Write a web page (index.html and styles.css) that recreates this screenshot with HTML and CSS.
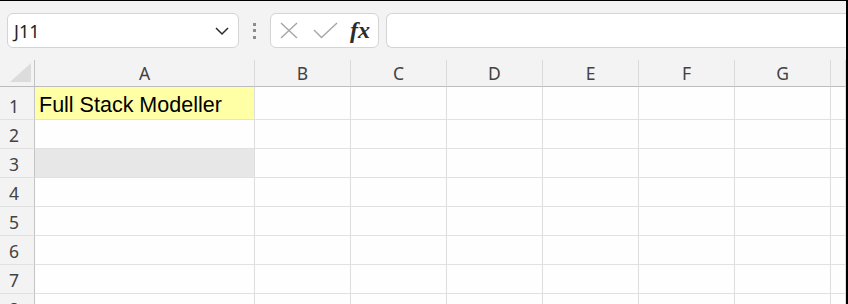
FILE: index.html
```html
<!DOCTYPE html>
<html lang="en">
<head>
    <meta charset="UTF-8">
    <title>Sheet</title>
    <link rel="stylesheet" href="styles.css">
</head>
<body>
    <div class="toolbar">
        <div class="namebox">
            <span class="ref">J11</span>
            <svg class="chevron" width="16" height="10" viewBox="0 0 16 10">
                <path d="M2 2 L8 8 L14 2" fill="none" stroke="#2b2b2b" stroke-width="1.5"/>
            </svg>
        </div>
        <div class="grip">
            <span class="dot"></span>
            <span class="dot"></span>
            <span class="dot"></span>
        </div>
        <div class="fxbox">
            <svg class="icon" width="18" height="17" viewBox="0 0 18 17">
                <path d="M1 1 L17 16 M17 1 L1 16" stroke="#a6a6a6" stroke-width="1.4" fill="none"/>
            </svg>
            <svg class="icon" width="25" height="17" viewBox="0 0 25 17">
                <path d="M1 8 L8.5 15.5 L24 1" stroke="#a6a6a6" stroke-width="1.4" fill="none"/>
            </svg>
            <span class="fx">fx</span>
        </div>
        <div class="formula"></div>
    </div>

    <div class="sheet">
        <div class="row head">
            <div class="corner"><span class="tri"></span></div>
            <div class="col">A</div>
            <div class="col">B</div>
            <div class="col">C</div>
            <div class="col">D</div>
            <div class="col">E</div>
            <div class="col">F</div>
            <div class="col">G</div>
            <div class="col"></div>
        </div>
        <div class="row first">
            <div class="num">1</div>
            <div class="cell note">Full Stack Modeller</div>
            <div class="cell"></div><div class="cell"></div><div class="cell"></div>
            <div class="cell"></div><div class="cell"></div><div class="cell"></div><div class="cell"></div>
        </div>
        <div class="row">
            <div class="num">2</div>
            <div class="cell"></div><div class="cell"></div><div class="cell"></div><div class="cell"></div>
            <div class="cell"></div><div class="cell"></div><div class="cell"></div><div class="cell"></div>
        </div>
        <div class="row">
            <div class="num">3</div>
            <div class="cell shade"></div><div class="cell"></div><div class="cell"></div><div class="cell"></div>
            <div class="cell"></div><div class="cell"></div><div class="cell"></div><div class="cell"></div>
        </div>
        <div class="row">
            <div class="num">4</div>
            <div class="cell"></div><div class="cell"></div><div class="cell"></div><div class="cell"></div>
            <div class="cell"></div><div class="cell"></div><div class="cell"></div><div class="cell"></div>
        </div>
        <div class="row">
            <div class="num">5</div>
            <div class="cell"></div><div class="cell"></div><div class="cell"></div><div class="cell"></div>
            <div class="cell"></div><div class="cell"></div><div class="cell"></div><div class="cell"></div>
        </div>
        <div class="row">
            <div class="num">6</div>
            <div class="cell"></div><div class="cell"></div><div class="cell"></div><div class="cell"></div>
            <div class="cell"></div><div class="cell"></div><div class="cell"></div><div class="cell"></div>
        </div>
        <div class="row">
            <div class="num">7</div>
            <div class="cell"></div><div class="cell"></div><div class="cell"></div><div class="cell"></div>
            <div class="cell"></div><div class="cell"></div><div class="cell"></div><div class="cell"></div>
        </div>
        <div class="row">
            <div class="num">8</div>
            <div class="cell"></div><div class="cell"></div><div class="cell"></div><div class="cell"></div>
            <div class="cell"></div><div class="cell"></div><div class="cell"></div><div class="cell"></div>
        </div>
    </div>
</body>
</html>
```

FILE: styles.css
```css
/* Global */
* {
    margin: 0;
    padding: 0;
    box-sizing: border-box;
}

body {
    width: 848px;
    height: 304px;
    overflow: hidden;
    background-color: #f3f3f3;
    border-top: 1px solid #000;
    border-right: 2px solid #000;
    font-family: "Noto Sans", "Open Sans", sans-serif;
    color: #424242;
}

/* Name box + formula bar */
.toolbar {
    height: 59px;
    display: flex;
    align-items: flex-start;
    padding: 12px 0 0 7px;
}

.namebox {
    width: 232px;
    height: 35px;
    background-color: #fff;
    border: 1px solid #d4d4d4;
    border-radius: 6px;
    display: flex;
    align-items: center;
    justify-content: space-between;
    padding: 0 8px 0 6px;
}

.ref {
    font-size: 18px;
    color: #242424;
}

.chevron {
    display: block;
}

.grip {
    width: 31px;
    height: 35px;
    display: flex;
    flex-direction: column;
    align-items: center;
    justify-content: center;
    gap: 3.5px;
}

.dot {
    width: 3px;
    height: 3px;
    background-color: #8c8c8c;
}

.fxbox {
    width: 109px;
    height: 35px;
    background-color: #fff;
    border: 1px solid #d4d4d4;
    border-radius: 6px;
    display: flex;
    align-items: center;
    padding: 0 0 0 9px;
}

.fxbox .icon {
    display: block;
    margin-right: 15px;
}

.fxbox .icon + .icon {
    margin-right: 12px;
}

.fx {
    font-family: "Liberation Serif", "DejaVu Serif", serif;
    font-style: italic;
    font-weight: bold;
    font-size: 24px;
    color: #2b2b2b;
    line-height: 1;
    margin-top: -2px;
}

.formula {
    flex: 1;
    height: 35px;
    margin-left: 7px;
    background-color: #fff;
    border: 1px solid #d4d4d4;
    border-right: none;
    border-radius: 6px 0 0 6px;
}

/* Grid */
.row {
    display: grid;
    grid-template-columns: 35px 220px repeat(6, 96px) 1fr;
    height: 29px;
}

.row.head {
    height: 27px;
}

.row.first {
    height: 33px;
}

.corner,
.col,
.num {
    background-color: #f3f3f3;
    font-size: 17.5px;
    line-height: 1;
}

.corner {
    position: relative;
    border-right: 1px solid #c4c4c4;
    border-bottom: 1px solid #bcbcbc;
}

.tri {
    position: absolute;
    left: 10px;
    top: 3px;
    width: 21px;
    height: 19px;
    background-color: #dcdcdc;
    clip-path: polygon(100% 0, 100% 100%, 0 100%);
}

.col {
    display: flex;
    align-items: flex-end;
    justify-content: center;
    padding-bottom: 4px;
    border-right: 1px solid #dadada;
    border-bottom: 1px solid #bcbcbc;
}

.num {
    display: flex;
    align-items: flex-end;
    justify-content: center;
    padding: 0 6px 4px 0;
    border-right: 1px solid #c4c4c4;
    border-bottom: 1px solid #e1e1e1;
}

.cell {
    background-color: #fefefe;
    border-right: 1px solid #dedede;
    border-bottom: 1px solid #e1e1e1;
}

.cell.note {
    background-color: #ffffa6;
    font-family: "Liberation Sans", Arial, sans-serif;
    font-size: 21.5px;
    line-height: 1;
    color: #000;
    display: flex;
    align-items: flex-end;
    padding: 0 0 3px 4px;
    white-space: nowrap;
}

.cell.shade {
    background-color: #e7e7e7;
}
```
